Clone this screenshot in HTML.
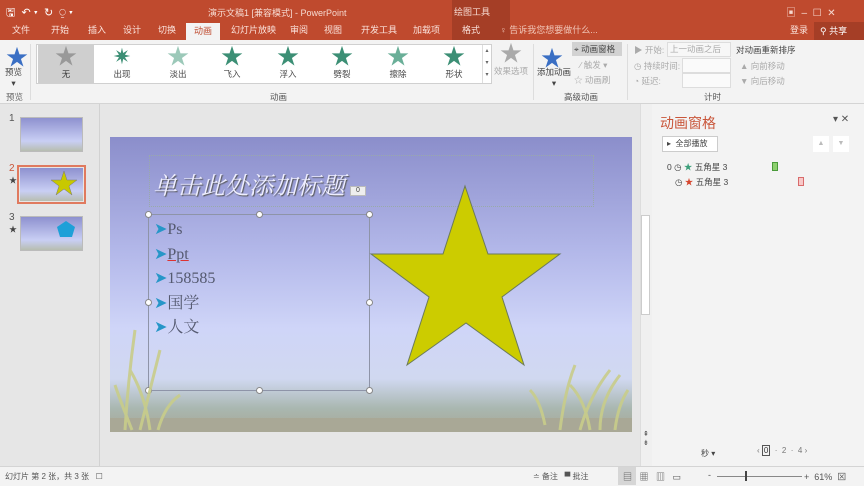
<!DOCTYPE html>
<html><head><meta charset="utf-8"><style>
*{margin:0;padding:0;box-sizing:border-box}
body{width:864px;height:486px;overflow:hidden;font-family:"Liberation Sans","Noto Sans CJK SC",sans-serif;font-size:9px;color:#444;background:#e6e6e6;position:relative}
.a{position:absolute}
.red{background:#bf4a2e;color:#fff}
.tab{position:absolute;top:20px;height:20px;line-height:20px;color:#fbe3dc;font-size:9px}
.ri{position:absolute;text-align:center;font-size:8.5px;color:#444}
.g{color:#aaa}
</style></head><body>
<div class="a red" style="left:0;top:0;width:864px;height:40px"></div>
<div class="a" style="left:452px;top:0;width:58px;height:40px;background:#a53e26"></div>
<div class="a" style="left:454px;top:5px;color:#f6d9d0;font-size:9px">绘图工具</div>
<div class="a" style="left:6px;top:4px;color:#fff;font-size:11px">🖫 &nbsp;↶ ▾ &nbsp;↻ &nbsp;⍜ ▾</div>
<div class="a" style="left:208px;top:6px;color:#f6d9d0;font-size:9px">演示文稿1 [兼容模式] - PowerPoint</div>
<div class="a" style="left:786px;top:4px;color:#f6d9d0;font-size:10px">▣ &nbsp;– &nbsp;☐ &nbsp;✕</div>
<div class="tab" style="left:12px">文件</div><div class="tab" style="left:51px">开始</div><div class="tab" style="left:88px">插入</div><div class="tab" style="left:123px">设计</div><div class="tab" style="left:158px">切换</div>
<div class="a" style="left:186px;top:23px;width:34px;height:18px;background:#f3f3f3;color:#bf4a2e;text-align:center;line-height:17px">动画</div>
<div class="tab" style="left:231px">幻灯片放映</div><div class="tab" style="left:290px">审阅</div><div class="tab" style="left:324px">视图</div><div class="tab" style="left:361px">开发工具</div><div class="tab" style="left:413px">加载项</div>
<div class="tab" style="left:462px">格式</div>
<div class="tab" style="left:500px;color:#f1c6b8">♀ 告诉我您想要做什么...</div>
<div class="tab" style="left:790px">登录</div>
<div class="a" style="left:814px;top:22px;width:50px;height:18px;background:#a53e26;color:#fff;line-height:18px;padding-left:6px">⚲ 共享</div>
<!-- ribbon -->
<div class="a" style="left:0;top:40px;width:864px;height:64px;background:#f3f3f3;border-bottom:1px solid #d4d4d4"></div>
<div class="a" style="left:6px;top:40px;color:#3a6fc4;font-size:22px">★</div>
<div class="ri" style="left:5px;top:67px;line-height:11px">预览<br>▾</div>
<div class="ri" style="left:6px;top:91px;color:#666">预览</div>
<div class="a" style="left:30px;top:44px;width:1px;height:56px;background:#ddd"></div>
<div class="a" style="left:36px;top:44px;width:456px;height:40px;background:#fff;border:1px solid #d0d0d0"></div>
<div class="a" style="left:38px;top:45px;width:56px;height:38px;background:#cfcfcf"></div>
<div class="ri" style="left:38px;top:45px;width:56px;color:#999;font-size:22px;line-height:24px">★<div style="font-size:8.5px;color:#333;line-height:11px">无</div></div>
<div class="ri" style="left:94px;top:45px;width:56px;color:#3c8f75;font-size:22px;line-height:24px">✷<div style="font-size:8.5px;color:#444;line-height:11px">出现</div></div>
<div class="ri" style="left:150px;top:45px;width:56px;color:#9cc9b9;font-size:22px;line-height:24px">★<div style="font-size:8.5px;color:#444;line-height:11px">淡出</div></div>
<div class="ri" style="left:204px;top:45px;width:56px;color:#3c8f75;font-size:22px;line-height:24px">★<div style="font-size:8.5px;color:#444;line-height:11px">飞入</div></div>
<div class="ri" style="left:260px;top:45px;width:56px;color:#3c8f75;font-size:22px;line-height:24px">★<div style="font-size:8.5px;color:#444;line-height:11px">浮入</div></div>
<div class="ri" style="left:314px;top:45px;width:56px;color:#3c8f75;font-size:22px;line-height:24px">★<div style="font-size:8.5px;color:#444;line-height:11px">劈裂</div></div>
<div class="ri" style="left:370px;top:45px;width:56px;color:#6aaf98;font-size:22px;line-height:24px">★<div style="font-size:8.5px;color:#444;line-height:11px">擦除</div></div>
<div class="ri" style="left:426px;top:45px;width:56px;color:#3c8f75;font-size:22px;line-height:24px">★<div style="font-size:8.5px;color:#444;line-height:11px">形状</div></div>
<div class="a" style="left:482px;top:45px;width:9px;height:38px;border-left:1px solid #ddd;font-size:6px;color:#666;line-height:12px;text-align:center">▴<br>▾<br>▾</div>
<div class="ri" style="left:494px;top:42px;width:34px;color:#aaa;font-size:22px;line-height:24px">★<div style="font-size:8.5px;line-height:11px">效果选项</div></div>
<div class="ri" style="left:270px;top:91px;color:#555">动画</div>
<div class="a" style="left:533px;top:44px;width:1px;height:56px;background:#ddd"></div>
<div class="a" style="left:541px;top:41px;color:#3a6fc4;font-size:22px">★</div>
<div class="ri" style="left:536px;top:67px;width:36px;line-height:11px">添加动画<br>▾</div>
<div class="a" style="left:572px;top:42px;width:50px;height:14px;background:#d2d2d2;font-size:8.5px;line-height:14px;padding-left:2px">⌖ 动画窗格</div>
<div class="a g" style="left:580px;top:59px;font-size:8.5px">⁄ 触发 ▾</div>
<div class="a g" style="left:574px;top:74px;font-size:8.5px">☆ 动画刷</div>
<div class="ri" style="left:564px;top:91px;color:#555">高级动画</div>
<div class="a" style="left:627px;top:44px;width:1px;height:56px;background:#ddd"></div>
<div class="a g" style="left:634px;top:44px;font-size:8.5px">▶ 开始:</div>
<div class="a" style="left:667px;top:42px;width:64px;height:15px;border:1px solid #ddd;background:#f7f7f7;color:#aaa;font-size:8.5px;line-height:13px;padding-left:2px">上一动画之后</div>
<div class="a g" style="left:634px;top:60px;font-size:8.5px">◷ 持续时间:</div>
<div class="a" style="left:682px;top:58px;width:49px;height:15px;border:1px solid #ddd;background:#fafafa"></div>
<div class="a g" style="left:634px;top:75px;font-size:8.5px">◔ 延迟:</div>
<div class="a" style="left:682px;top:73px;width:49px;height:15px;border:1px solid #ddd;background:#fafafa"></div>
<div class="ri" style="left:704px;top:91px;color:#555">计时</div>
<div class="a" style="left:736px;top:44px;font-size:8.5px;color:#444">对动画重新排序</div>
<div class="a g" style="left:740px;top:60px;font-size:8.5px">▲ 向前移动</div>
<div class="a g" style="left:740px;top:75px;font-size:8.5px">▼ 向后移动</div>
<!-- thumbnails -->
<div class="a" style="left:0;top:104px;width:100px;height:362px;background:#e6e6e6;border-right:1px solid #d2d2d2"></div>
<div class="a" style="left:9px;top:113px;font-size:10px;color:#555">1</div>
<div class="a" style="left:20px;top:117px;width:63px;height:35px;background:linear-gradient(#8e91cf,#c9cff4 70%,#b7bdb0);border:1px solid #bbb"></div>
<div class="a" style="left:9px;top:163px;font-size:10px;color:#c9563a">2</div><div class="a" style="left:9px;top:175px;font-size:8px">★</div>
<div class="a" style="left:17px;top:165px;width:69px;height:39px;border:2px solid #e07a5f"></div>
<div class="a" style="left:20px;top:168px;width:63px;height:33px;background:linear-gradient(#8e91cf,#c9cff4 70%,#b7bdb0)"></div>
<svg class="a" style="left:50px;top:170px" width="28" height="26" viewBox="0 0 28 26"><polygon points="14,1 17,10 27,10 19,16 22,25 14,19 6,25 9,16 1,10 11,10" fill="#c8c800" stroke="#777" stroke-width=".5"/></svg>
<div class="a" style="left:9px;top:212px;font-size:10px;color:#555">3</div><div class="a" style="left:9px;top:224px;font-size:8px">★</div>
<div class="a" style="left:20px;top:216px;width:63px;height:35px;background:linear-gradient(#8e91cf,#c9cff4 70%,#b7bdb0);border:1px solid #bbb"></div>
<svg class="a" style="left:56px;top:220px" width="20" height="18"><polygon points="10,1 19,7 16,17 4,17 1,7" fill="#1ea0d8"/></svg>
<!-- slide -->
<div class="a" style="left:110px;top:137px;width:522px;height:295px;background:linear-gradient(#8b8ecb 0%,#b4b9ea 40%,#cfd5f8 65%,#d0d8f0 82%,#a9b7b0 92%,#a8a795 100%)"></div>
<div class="a" style="left:110px;top:418px;width:522px;height:14px;background:#a9a896"></div>
<div class="a" style="left:149px;top:155px;width:445px;height:52px;border:1px dotted #9aa"></div>
<div class="a" style="left:153px;top:166px;font-family:'Noto Serif CJK SC',serif;font-style:italic;font-size:24px;color:#eef;text-shadow:1px 1px 1px #555">单击此处添加标题</div>
<div class="a" style="left:350px;top:186px;width:16px;height:10px;background:#eee;border:1px solid #bbb;font-size:7px;text-align:center;line-height:8px">0</div>
<div class="a" style="left:148px;top:214px;width:222px;height:177px;border:1px solid #8e94a8"></div>
<div class="a" style="left:145px;top:211px;width:7px;height:7px;border-radius:50%;background:#fff;border:1px solid #888"></div>
<div class="a" style="left:256px;top:211px;width:7px;height:7px;border-radius:50%;background:#fff;border:1px solid #888"></div>
<div class="a" style="left:366px;top:211px;width:7px;height:7px;border-radius:50%;background:#fff;border:1px solid #888"></div>
<div class="a" style="left:145px;top:299px;width:7px;height:7px;border-radius:50%;background:#fff;border:1px solid #888"></div>
<div class="a" style="left:366px;top:299px;width:7px;height:7px;border-radius:50%;background:#fff;border:1px solid #888"></div>
<div class="a" style="left:145px;top:387px;width:7px;height:7px;border-radius:50%;background:#fff;border:1px solid #888"></div>
<div class="a" style="left:256px;top:387px;width:7px;height:7px;border-radius:50%;background:#fff;border:1px solid #888"></div>
<div class="a" style="left:366px;top:387px;width:7px;height:7px;border-radius:50%;background:#fff;border:1px solid #888"></div>
<div class="a" style="left:154px;top:218px;font-family:'Liberation Serif','Noto Serif CJK SC',serif;font-size:16px;color:#555a70;line-height:24.6px">
<div><span style="color:#2696c8">➤</span>Ps</div><div><span style="color:#2696c8">➤</span><u style="text-decoration-color:#d33">Ppt</u></div><div><span style="color:#2696c8">➤</span>158585</div><div><span style="color:#2696c8">➤</span>国学</div><div><span style="color:#2696c8">➤</span>人文</div></div>
<svg class="a" style="left:0;top:0" width="864" height="486">
<polygon points="465,186 488,254 560,254 502,297 524,365 466,323 407,365 429,297 371,254 443,254" fill="#cccc00" stroke="#6b7a5a" stroke-width="1"/>
<g stroke="#c8cc8a" stroke-width="3" fill="none" opacity=".9">
<path d="M125,430 Q128,380 135,330 M140,430 Q150,390 160,350 M150,430 Q145,395 130,370 M132,430 Q120,400 115,385 M158,430 Q165,405 180,395 M560,430 Q565,390 575,365 M580,430 Q590,395 610,370 M600,430 Q600,400 620,375 M545,425 Q540,400 530,390 M590,430 Q585,400 570,385 M615,430 Q618,405 628,390"/></g>
</svg>
<!-- scrollbar -->
<div class="a" style="left:640px;top:104px;width:12px;height:362px;background:#f0f0f0;border-left:1px solid #ddd"></div>
<div class="a" style="left:641px;top:215px;width:9px;height:100px;background:#fff;border:1px solid #ccc"></div>
<div class="a" style="left:643px;top:430px;font-size:7px;line-height:9px">⇞<br>⇟</div>
<!-- anim pane -->
<div class="a" style="left:652px;top:104px;width:212px;height:362px;background:#f3f3f3"></div>
<div class="a" style="left:660px;top:113px;font-size:14px;color:#c9563a">动画窗格</div>
<div class="a" style="left:833px;top:114px;font-size:10px;color:#555">▾ ✕</div>
<div class="a" style="left:662px;top:136px;width:56px;height:16px;background:#fff;border:1px solid #ccc;font-size:8px;line-height:14px;padding-left:4px">▸ &nbsp;全部播放</div>
<div class="a" style="left:813px;top:136px;width:16px;height:16px;background:#fff;font-size:7px;color:#bbb;text-align:center;line-height:16px">▲</div>
<div class="a" style="left:833px;top:136px;width:16px;height:16px;background:#fff;font-size:7px;color:#bbb;text-align:center;line-height:16px">▼</div>
<div class="a" style="left:667px;top:161px;font-size:8.5px">0 ◷ <span style="color:#3c9f7a">★</span> 五角星 3</div>
<div class="a" style="left:772px;top:162px;width:6px;height:9px;background:#8ed06f;border:1px solid #4a9a3a"></div>
<div class="a" style="left:675px;top:176px;font-size:8.5px">◷ <span style="color:#d5452d">★</span> 五角星 3</div>
<div class="a" style="left:798px;top:177px;width:6px;height:9px;background:#f8c8c8;border:1px solid #d86b6b"></div>
<div class="a" style="left:701px;top:448px;font-size:8px">秒 ▾</div>
<div class="a" style="left:757px;top:446px;font-size:8px;color:#777">‹ <span style="border:1px solid #555;padding:0 1px;color:#333">0</span> &nbsp;· &nbsp;2 &nbsp;· &nbsp;4 ›</div>
<!-- status -->
<div class="a" style="left:0;top:466px;width:864px;height:20px;background:#f3f3f3;border-top:1px solid #d4d4d4"></div>
<div class="a" style="left:5px;top:471px;font-size:8px;color:#555">幻灯片 第 2 张，共 3 张 &nbsp; ☐</div>
<div class="a" style="left:533px;top:471px;font-size:8px;color:#555">≐ 备注 &nbsp;&nbsp;▀ 批注</div>
<div class="a" style="left:618px;top:467px;width:18px;height:18px;background:#d6d6d6"></div>
<div class="a" style="left:623px;top:470px;font-size:9px;color:#555">▤ &nbsp;&nbsp;▦ &nbsp;&nbsp;▥ &nbsp;&nbsp;▭</div>
<div class="a" style="left:708px;top:470px;font-size:9px;color:#555">-</div>
<div class="a" style="left:717px;top:476px;width:85px;height:1px;background:#888"></div>
<div class="a" style="left:745px;top:471px;width:2px;height:10px;background:#444"></div>
<div class="a" style="left:804px;top:470px;font-size:9px;color:#555">+ &nbsp;61% &nbsp;⊠</div>
</body></html>
